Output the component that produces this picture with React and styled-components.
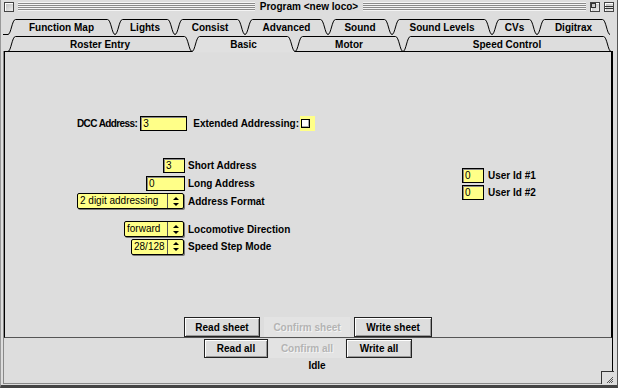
import React from 'react';
import styled, { createGlobalStyle } from 'styled-components';

const BG = '#dddddd';
const YELLOW = '#ffff88';
const FONT = '"Liberation Sans", Arial, sans-serif';

const GlobalStyle = createGlobalStyle`
  html, body { margin: 0; padding: 0; background: ${BG}; }
  body { font-family: ${FONT}; font-size: 10px; color: #000; }
  * { box-sizing: border-box; }
`;

const Window = styled.div`
  position: relative;
  width: 618px;
  height: 388px;
  display: flex;
  flex-direction: column;
  background: ${BG};
  border-left: 1px solid #999;
  border-right: 1px solid #555;
  border-bottom: 3px solid #444;
  padding-bottom: 1px;
  overflow: hidden;
`;

const TitleBar = styled.div`
  height: 13px;
  flex: none;
  display: grid;
  grid-template-columns: 1fr auto 1fr;
  align-items: center;
  padding: 0 3px;
`;

const TitleSide = styled.div`
  display: flex;
  align-items: center;
  gap: 4px;
`;

const Stripes = styled.div`
  flex: 1;
  height: 9px;
  background: repeating-linear-gradient(to bottom, #f4f4f4 0 1px, #8a8a8a 1px 2px);
`;

const Title = styled.div`
  font-weight: bold;
  font-size: 10px;
  padding: 0 5px;
  white-space: nowrap;
`;

const WinBox = styled.div`
  width: 10px;
  height: 10px;
  border: 1px solid #444;
  background: linear-gradient(135deg, #bbb, #eee);
  box-shadow: inset 1px 1px 0 #fff;
  display: flex;
  align-items: center;
  justify-content: center;
`;

const TabStack = styled.div`
  flex: none;
  margin: 6px 0 -1px 2px;
  display: flex;
  flex-direction: column;
  position: relative;
  z-index: 2;
`;

const TabRow = styled.div`
  display: flex;
  height: ${p => p.$h}px;
`;

const Lead = styled.div`
  width: 5px;
  height: 100%;
  border-bottom: ${p => (p.$line ? '1px solid #000' : 'none')};
`;

const TabEl = styled.div`
  display: grid;
  width: ${p => p.$w}px;
  height: 100%;
  & > * { grid-area: 1 / 1; }
`;

const TabSvg = styled.svg`
  width: 100%;
  height: 100%;
  overflow: visible;
  display: block;
`;

const TabLabel = styled.span`
  align-self: center;
  justify-self: center;
  font-weight: bold;
  font-size: 10px;
  white-space: nowrap;
  padding-top: ${p => p.$pt || 0}px;
`;

const Frame = styled.div`
  flex: 1;
  display: flex;
  flex-direction: column;
  margin: 0 4px 0 2px;
  border-left: 1px solid #888;
  border-right: 1px solid #000;
  border-bottom: 1px solid #888;
`;

const Panel = styled.div`
  flex: 1;
  display: flex;
  flex-direction: column;
  border-top: 1px solid #000;
  border-left: 1px solid #000;
  border-right: 1px solid #000;
  border-bottom: 1px solid #555;
`;

const Content = styled.div`
  padding: 64px 0 0 72px;
  display: flex;
  flex-direction: column;
`;

const Line = styled.div`
  display: flex;
  align-items: center;
  height: 15px;
`;

const Label = styled.span`
  font-weight: bold;
  font-size: 10px;
  white-space: nowrap;
  margin-left: ${p => p.$ml || 0}px;
  letter-spacing: ${p => p.$ls || 0}px;
`;

const TextField = styled.div`
  width: ${p => p.$w}px;
  height: 15px;
  margin-left: ${p => p.$ml || 0}px;
  background: ${YELLOW};
  border: 1px solid #000;
  box-shadow: inset 1px 1px 0 #888;
  font-size: 10px;
  line-height: 13px;
  padding-left: 2px;
  justify-self: end;
`;

const CheckWrap = styled.div`
  width: 15px;
  height: 15px;
  margin-left: 1px;
  background: ${YELLOW};
  display: flex;
  align-items: center;
  padding-left: 1px;
`;

const CheckBox = styled.div`
  width: 9px;
  height: 9px;
  border: 1px solid #000;
  background: #fff;
  box-shadow: inset -1px -1px 0 #aaa;
`;

const FormArea = styled.div`
  margin-top: 25px;
  display: grid;
  grid-template-columns: 385px auto;
  align-items: start;
`;

const Column = styled.div`
  display: flex;
  flex-direction: column;
  margin-top: ${p => p.$mt || 0}px;
`;

const FieldRow = styled.div`
  display: grid;
  grid-template-columns: ${p => p.$col}px auto;
  column-gap: ${p => p.$gap}px;
  align-items: center;
  height: ${p => p.$h}px;
  margin-top: ${p => p.$mt || 0}px;
`;

const Combo = styled.div`
  justify-self: end;
  width: ${p => p.$w}px;
  height: 16px;
  display: flex;
  background: ${YELLOW};
  border: 1px solid #000;
  border-radius: 2px;
  box-shadow: 1px 1px 0 #777;
  margin-right: 1px;
`;

const ComboText = styled.span`
  flex: 1;
  font-size: 10px;
  line-height: 14px;
  padding-left: 2px;
  white-space: nowrap;
  overflow: hidden;
`;

const ComboArrows = styled.span`
  width: 16px;
  border-left: 1px solid #555;
  display: flex;
  align-items: center;
  justify-content: center;
`;

const ButtonRow = styled.div`
  margin-top: auto;
  display: flex;
  justify-content: center;
  gap: ${p => p.$gap}px;
`;

const Button = styled.button`
  width: ${p => p.$w}px;
  height: ${p => p.$h}px;
  padding: 0;
  margin: 0;
  font-family: ${FONT};
  font-weight: bold;
  font-size: 10px;
  color: #000;
  background: ${BG};
  border: 1px solid #222;
  border-radius: 0;
  box-shadow: inset 1px 1px 0 #fff, inset -1px -1px 0 #999;
  &:disabled {
    color: #b4b4b4;
    background: #e3e3e3;
    border-color: #e3e3e3;
    box-shadow: none;
    text-shadow: 1px 1px 0 #f4f4f4;
  }
`;

const Footer = styled.div`
  height: 45px;
  flex: none;
  display: flex;
  flex-direction: column;
  align-items: center;
  padding-top: 1px;
`;

const FooterButtons = styled.div`
  display: flex;
  gap: 1px;
`;

const Status = styled.div`
  margin-top: 2px;
  padding-left: 18px;
  font-weight: bold;
  font-size: 10px;
  line-height: 12px;
`;

const GrowBox = styled.div`
  position: absolute;
  right: 3px;
  bottom: 1px;
  width: 13px;
  height: 13px;
  background: ${BG};
  border-left: 1px solid #333;
  border-top: 1px solid #333;
  display: flex;
  align-items: flex-end;
  justify-content: flex-end;
`;

function Tab({ w, h, label, selected, row }) {
  const ty = row === 1 ? 0.5 : 1.5;
  const by = h - 0.5;
  const sidePath = `M0,${by} C3,${by} 4,${ty} 7.5,${ty} H${w - 7.5} C${w - 4},${ty} ${w - 3},${by} ${w},${by}`;
  const fillBottom = selected ? h + 0.5 : by;
  const fillPath = `M0,${fillBottom} L0,${by} C3,${by} 4,${ty} 7.5,${ty} H${w - 7.5} C${w - 4},${ty} ${w - 3},${by} ${w},${by} L${w},${fillBottom} Z`;
  return (
    <TabEl $w={w}>
      <TabSvg viewBox={`0 0 ${w} ${h}`} preserveAspectRatio="none">
        <path d={fillPath} fill={selected ? '#e0e0e0' : BG} stroke="none" />
        <path d={sidePath} fill="none" stroke="#000" strokeWidth="1" />
        {row === 2 && !selected && <path d={`M0,${by} H${w}`} stroke="#000" strokeWidth="1" />}
      </TabSvg>
      <TabLabel $pt={row === 2 ? 1 : 0}>{label}</TabLabel>
    </TabEl>
  );
}

const Arrows = () => (
  <svg width="6" height="9" viewBox="0 0 6 9">
    <path d="M3,0 L6,3 H0 Z" fill="#000" />
    <path d="M0,6 H6 L3,9 Z" fill="#000" />
  </svg>
);

const row1 = [
  ['Function Map', 107],
  ['Lights', 60],
  ['Consist', 70],
  ['Advanced', 83],
  ['Sound', 64],
  ['Sound Levels', 100],
  ['CVs', 45],
  ['Digitrax', 73],
];
const row2 = [
  ['Roster Entry', 184],
  ['Basic', 103, true],
  ['Motor', 108],
  ['Speed Control', 208],
];

export default function App() {
  return (
    <>
      <GlobalStyle />
      <Window>
        <TitleBar>
          <TitleSide>
            <WinBox />
            <Stripes />
          </TitleSide>
          <Title>Program &lt;new loco&gt;</Title>
          <TitleSide>
            <Stripes />
            <WinBox>
              <svg width="8" height="8" viewBox="0 0 8 8">
                <rect x="0.5" y="0.5" width="4" height="4" fill="none" stroke="#333" />
              </svg>
            </WinBox>
            <WinBox>
              <svg width="8" height="8" viewBox="0 0 8 8">
                <path d="M0,3.5 H8 M0,5.5 H8" stroke="#333" />
              </svg>
            </WinBox>
          </TitleSide>
        </TitleBar>

        <TabStack>
          <TabRow $h={16}>
            <Lead $line />
            {row1.map(([l, w]) => (
              <Tab key={l} label={l} w={w} h={16} row={1} />
            ))}
          </TabRow>
          <TabRow $h={17}>
            <Lead />
            {row2.map(([l, w, s]) => (
              <Tab key={l} label={l} w={w} h={17} row={2} selected={!!s} />
            ))}
          </TabRow>
        </TabStack>

        <Frame>
          <Panel>
            <Content>
              <Line>
                <Label $ls={-0.6}>DCC Address:</Label>
                <TextField $w={47} $ml={3}>3</TextField>
                <Label $ml={6}>Extended Addressing:</Label>
                <CheckWrap>
                  <CheckBox />
                </CheckWrap>
              </Line>

              <FormArea>
                <Column>
                  <FieldRow $col={108} $gap={3} $h={18}>
                    <TextField $w={22}>3</TextField>
                    <Label>Short Address</Label>
                  </FieldRow>
                  <FieldRow $col={108} $gap={3} $h={18}>
                    <TextField $w={39}>0</TextField>
                    <Label>Long Address</Label>
                  </FieldRow>
                  <FieldRow $col={108} $gap={3} $h={18}>
                    <Combo $w={107}>
                      <ComboText>2 digit addressing</ComboText>
                      <ComboArrows><Arrows /></ComboArrows>
                    </Combo>
                    <Label>Address Format</Label>
                  </FieldRow>
                  <FieldRow $col={108} $gap={3} $h={18} $mt={10}>
                    <Combo $w={60}>
                      <ComboText>forward</ComboText>
                      <ComboArrows><Arrows /></ComboArrows>
                    </Combo>
                    <Label>Locomotive Direction</Label>
                  </FieldRow>
                  <FieldRow $col={108} $gap={3} $h={17}>
                    <Combo $w={53}>
                      <ComboText>28/128</ComboText>
                      <ComboArrows><Arrows /></ComboArrows>
                    </Combo>
                    <Label>Speed Step Mode</Label>
                  </FieldRow>
                </Column>
                <Column $mt={11}>
                  <FieldRow $col={22} $gap={4} $h={17}>
                    <TextField $w={22}>0</TextField>
                    <Label>User Id #1</Label>
                  </FieldRow>
                  <FieldRow $col={22} $gap={4} $h={17}>
                    <TextField $w={22}>0</TextField>
                    <Label>User Id #2</Label>
                  </FieldRow>
                </Column>
              </FormArea>
            </Content>

            <ButtonRow $gap={4}>
              <Button $w={76} $h={20}>Read sheet</Button>
              <Button $w={86} $h={20} disabled>Confirm sheet</Button>
              <Button $w={78} $h={20}>Write sheet</Button>
            </ButtonRow>
          </Panel>

          <Footer>
            <FooterButtons>
              <Button $w={64} $h={19}>Read all</Button>
              <Button $w={76} $h={19} disabled>Confirm all</Button>
              <Button $w={66} $h={19}>Write all</Button>
            </FooterButtons>
            <Status>Idle</Status>
          </Footer>
        </Frame>

        <GrowBox>
          <svg width="11" height="11" viewBox="0 0 11 11">
            <path d="M4,10 L10,4 M6,10 L10,6 M8,10 L10,8" stroke="#555" strokeWidth="1" />
          </svg>
        </GrowBox>
      </Window>
    </>
  );
}
